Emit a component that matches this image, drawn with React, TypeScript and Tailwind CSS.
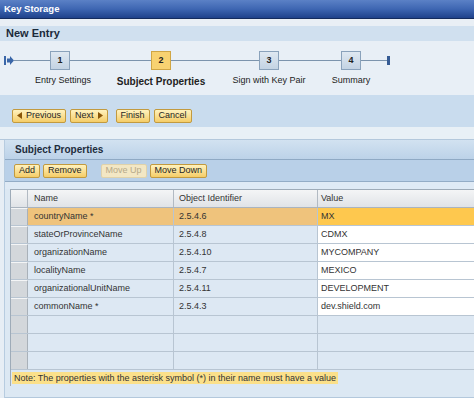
import React from 'react';

const font = { fontFamily: '"Liberation Sans", Arial, sans-serif' };

interface Row {
    name: string;
    oid: string;
    value: string;
}

const rows: Row[] = [
    { name: 'countryName *', oid: '2.5.4.6', value: 'MX' },
    { name: 'stateOrProvinceName', oid: '2.5.4.8', value: 'CDMX' },
    { name: 'organizationName', oid: '2.5.4.10', value: 'MYCOMPANY' },
    { name: 'localityName', oid: '2.5.4.7', value: 'MEXICO' },
    { name: 'organizationalUnitName', oid: '2.5.4.11', value: 'DEVELOPMENT' },
    { name: 'commonName *', oid: '2.5.4.3', value: 'dev.shield.com' },
];

const Btn: React.FC<{ children: React.ReactNode; disabled?: boolean; className?: string }> = ({
    children,
    disabled,
    className = '',
}) => (
    <span
        className={`inline-flex items-center gap-[4px] h-[14px] px-[4px] rounded-[2px] border text-[9px] leading-none ${
            disabled
                ? 'border-[#dfd2ab] bg-[#f3e7c4] text-[#b6a98a]'
                : 'border-[#c29a3f] bg-linear-to-b from-[#fff2bd] to-[#f5cd66] text-[#262626]'
        } ${className}`}
    >
        {children}
    </span>
);

const Tri: React.FC<{ dir: 'left' | 'right' }> = ({ dir }) => (
    <svg width="5" height="7" viewBox="0 0 5 7">
        {dir === 'left' ? (
            <path d="M5 0 L0 3.5 L5 7 Z" fill="#8a5608" />
        ) : (
            <path d="M0 0 L5 3.5 L0 7 Z" fill="#8a5608" />
        )}
    </svg>
);

const Line: React.FC<{ w: string }> = ({ w }) => (
    <div className={`h-[19px] flex items-center ${w}`}>
        <div className="h-[1px] w-full bg-[#7c94ad]" />
    </div>
);

const Step: React.FC<{ n: number; label: string; active?: boolean; labelClass?: string }> = ({
    n,
    label,
    active,
    labelClass = '',
}) => (
    <div className="w-[20px] flex flex-col items-center">
        <div
            className={`w-[20px] h-[19px] flex items-center justify-center border text-[9px] font-bold text-[#222] ${
                active
                    ? 'border-[#d0a645] bg-[#f8d271]'
                    : 'border-[#8aa2bb] bg-linear-to-b from-[#dfe8f1] to-[#c3d3e3]'
            }`}
        >
            {n}
        </div>
        <div
            className={`mt-[4px] whitespace-nowrap text-[#222] ${
                active ? 'text-[10px] font-bold' : 'text-[9px]'
            } ${labelClass}`}
        >
            {label}
        </div>
    </div>
);

export default function App() {
    return (
        <div className="w-[474px] h-[398px] overflow-hidden bg-[#e7eef5] flex flex-col" style={font}>
            {/* title bar */}
            <div className="h-[19px] shrink-0 flex items-center px-[4px] bg-linear-to-b from-[#5b81c6] via-[#3e66b2] to-[#1f428b] border-b border-[#142c5e]">
                <span className="text-white font-bold text-[9.5px]">Key Storage</span>
            </div>
            <div className="h-[7px] shrink-0 bg-[#e9eff5]" />
            <div className="h-[15px] shrink-0 flex items-center px-[6px] bg-[#d0e0ef]">
                <span className="text-[11px] font-bold text-[#1b2a3a]">New Entry</span>
            </div>

            {/* roadmap */}
            <div className="h-[54px] shrink-0 bg-[#e8eff6] flex items-start pt-[10px] pl-[4px]">
                <div className="h-[19px] flex items-center">
                    <svg width="10" height="9" viewBox="0 0 10 9">
                        <rect x="0" y="0" width="2" height="9" fill="#3a66a8" />
                        <path d="M3 2.5 H6 V0 L10 4.5 L6 9 V6.5 H3 Z" fill="#3a66a8" />
                    </svg>
                </div>
                <Line w="w-[36px]" />
                <Step n={1} label="Entry Settings" labelClass="ml-[6px]" />
                <Line w="w-[81px]" />
                <Step n={2} label="Subject Properties" active />
                <Line w="w-[88px]" />
                <Step n={3} label="Sign with Key Pair" />
                <Line w="w-[62px]" />
                <Step n={4} label="Summary" />
                <Line w="w-[26px]" />
                <div className="h-[19px] flex items-center">
                    <div className="w-[3px] h-[9px] bg-[#355b94]" />
                </div>
            </div>

            {/* wizard buttons */}
            <div className="h-[32px] shrink-0 bg-[#c9dcee] flex items-center gap-[4px] pl-[12px] pt-[9px]">
                <Btn>
                    <Tri dir="left" />
                    Previous
                </Btn>
                <Btn>
                    Next
                    <Tri dir="right" />
                </Btn>
                <Btn className="ml-[4px]">Finish</Btn>
                <Btn>Cancel</Btn>
            </div>
            <div className="h-[13px] shrink-0 bg-[#e8f0f6] border-b border-[#b3c8dc]" />

            {/* panel */}
            <div className="flex-1 ml-[4px] border-l border-[#b7cce0] bg-[#dce8f3] flex flex-col">
                <div className="h-[20px] shrink-0 flex items-center pl-[10px] bg-linear-to-b from-[#d2e2f1] to-[#bcd2e8] border-b border-[#8fa9c4]">
                    <span className="text-[10px] font-bold text-[#1e2d3d]">Subject Properties</span>
                </div>
                <div className="h-[22px] shrink-0 flex items-center gap-[3px] pl-[9px] bg-[#b9d0e8] border-b border-[#93acc6]">
                    <Btn>Add</Btn>
                    <Btn>Remove</Btn>
                    <Btn disabled className="ml-[11px]">
                        Move Up
                    </Btn>
                    <Btn>Move Down</Btn>
                </div>
                <div className="h-[7px] shrink-0 bg-[#dfeaf5]" />

                {/* table */}
                <div className="ml-[5px] border-l border-t border-[#9eabb8] text-[9px] text-[#333]">
                    <div className="flex h-[18px] bg-linear-to-b from-[#f4f5f6] to-[#e0e3e7] border-b border-[#aab4bf]">
                        <div className="w-[17px] shrink-0 border-r border-[#b2bac3]" />
                        <div className="w-[146px] shrink-0 flex items-center pl-[6px] border-r border-[#b2bac3]">Name</div>
                        <div className="w-[144px] shrink-0 flex items-center pl-[5px] border-r border-[#b2bac3]">
                            Object Identifier
                        </div>
                        <div className="flex-1 flex items-center pl-[3px]">Value</div>
                    </div>
                    {rows.map((r, i) => {
                        const sel = i === 0;
                        return (
                            <div key={r.name} className="flex h-[18px] border-b border-[#b8c5d2]">
                                <div className="w-[17px] shrink-0 bg-[#d3d7db] border-r border-[#a9b1b9] border-t border-t-[#f4f5f6]" />
                                <div
                                    className={`w-[146px] shrink-0 flex items-center pl-[6px] border-r border-[#b8c5d2] ${
                                        sel ? 'bg-[#efc37c]' : 'bg-[#dde8f3]'
                                    }`}
                                >
                                    {r.name}
                                </div>
                                <div
                                    className={`w-[144px] shrink-0 flex items-center pl-[5px] border-r border-[#b8c5d2] ${
                                        sel ? 'bg-[#efc37c]' : 'bg-[#dde8f3]'
                                    }`}
                                >
                                    {r.oid}
                                </div>
                                <div
                                    className={`flex-1 flex items-center pl-[3px] ${
                                        sel ? 'bg-[#fec84e]' : 'bg-white'
                                    }`}
                                >
                                    {r.value}
                                </div>
                            </div>
                        );
                    })}
                    {[0, 1, 2].map((i) => (
                        <div key={i} className="flex h-[18px] border-b border-[#b8c5d2] bg-[#dde8f3]">
                            <div className="w-[17px] shrink-0 bg-[#d3d7db] border-r border-[#a9b1b9]" />
                            <div className="w-[146px] shrink-0 border-r border-[#b8c5d2]" />
                            <div className="w-[144px] shrink-0 border-r border-[#b8c5d2]" />
                            <div className="flex-1" />
                        </div>
                    ))}
                    <div className="h-[16px] flex items-center pl-[1px]">
                        <span className="bg-[#fbe08a] px-[2px] leading-[12px]">
                            Note: The properties with the asterisk symbol (*) in their name must have a value
                        </span>
                    </div>
                </div>
                <div className="flex-1 border-b border-[#b3c8dc]" />
            </div>
        </div>
    );
}
